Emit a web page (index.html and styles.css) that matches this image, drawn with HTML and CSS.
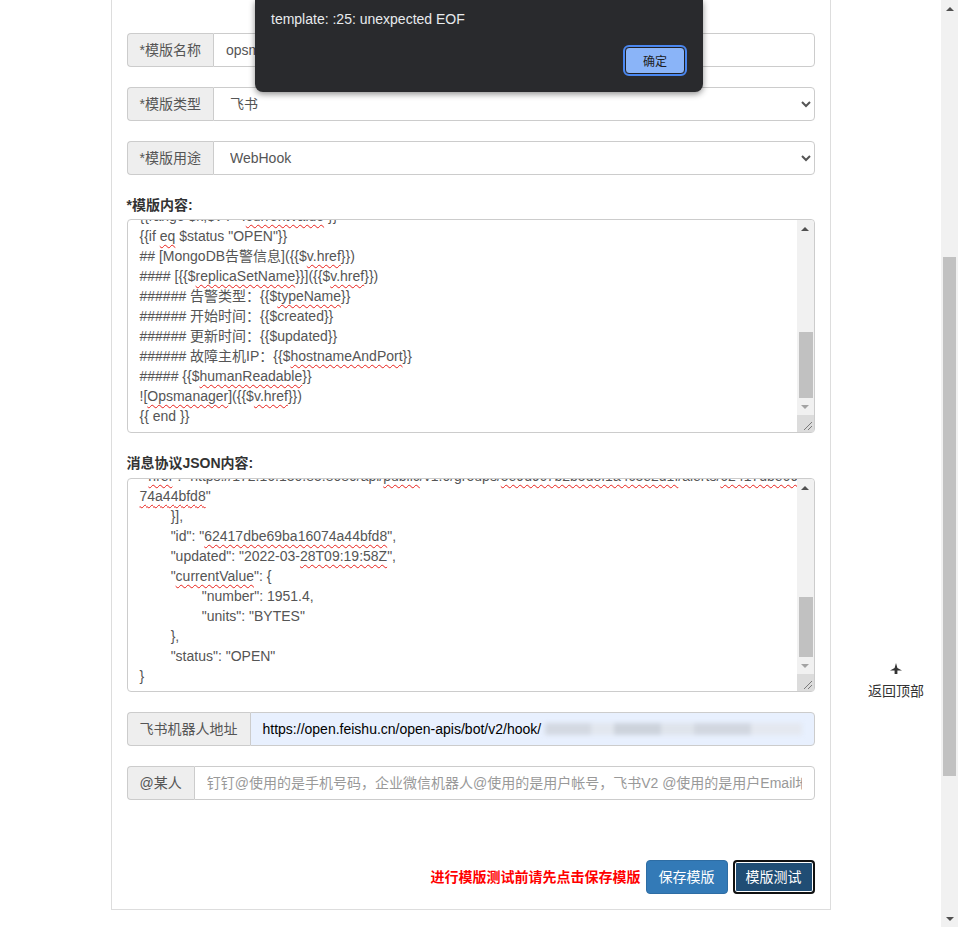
FILE: index.html
```html
<!doctype html>
<html>
	<head>
		<meta charset='utf-8'>
		<title>模版编辑</title>
		<link rel="stylesheet" href="styles.css">
	</head>
	<body>
		<div class='page'>
			<div class='panel'>
				<div class='input-group'>
					<span class='addon'>*模版名称</span>
					<input class='form-control' value='opsmanager-feishu'>
				</div>
				<div class='input-group'>
					<span class='addon'>*模版类型</span>
					<select class='form-control'>
						<option>飞书</option>
					</select>
				</div>
				<div class='input-group'>
					<span class='addon'>*模版用途</span>
					<select class='form-control'>
						<option>WebHook</option>
					</select>
				</div>

				<label class='field-label'>*模版内容:</label>
				<div class='ta'>
					<div class='ta-body'>
						<div class='ta-lines ta-lines-tpl'>
							<div>{{range $k,$v := .<span class='sp'>currentValue</span> }}</div>
							<div>{{if <span class='sp'>eq</span> $status "OPEN"}}</div>
							<div>## [MongoDB告警信息]({{$<span class='sp'>v.href</span>}})</div>
							<div>#### [{{$<span class='sp'>replicaSetName</span>}}]({{$<span class='sp'>v.href</span>}})</div>
							<div>###### 告警类型：{{$<span class='sp'>typeName</span>}}</div>
							<div>###### 开始时间：{{$created}}</div>
							<div>###### 更新时间：{{$updated}}</div>
							<div>###### 故障主机IP：{{$<span class='sp'>hostnameAndPort</span>}}</div>
							<div>##### {{$<span class='sp'>humanReadable</span>}}</div>
							<div>![<span class='sp'>Opsmanager</span>]({{$<span class='sp'>v.href</span>}})</div>
							<div>{{ end }}</div>
						</div>
					</div>
					<div class='sbar'>
						<div class='sbtn'><span class='arr-up'></span></div>
						<div class='strack'><div class='sthumb thumb-tpl'></div></div>
						<div class='sbtn'><span class='arr-down'></span></div>
						<div class='corner'>
							<svg width='17' height='17' viewBox='0 0 17 17'><path d='M15 7 L7 15 M15 11 L11 15' stroke='#7a7a7a' stroke-width='1'/></svg>
						</div>
					</div>
				</div>

				<label class='field-label'>消息协议JSON内容:</label>
				<div class='ta'>
					<div class='ta-body'>
						<div class='ta-lines ta-lines-json'>
							<div> "<span class='sp'>href</span>": "https://172.16.130.85:8080/api/<span class='sp'>public</span>/v1.0/groups/<span class='sp'>5e9d9c7b2b5d8f1a4c3e2d1f</span>/alerts/<span class='sp'>62417dbe69ba16074a44bfd8</span></div>
							<div><span class='sp'>74a44bfd8</span>"</div>
							<div>	}],</div>
							<div>	"id": "<span class='sp'>62417dbe69ba16074a44bfd8</span>",</div>
							<div>	"updated": "2022-03-<span class='sp'>28T09:19:58Z</span>",</div>
							<div>	"<span class='sp'>currentValue</span>": {</div>
							<div>		"number": 1951.4,</div>
							<div>		"units": "BYTES"</div>
							<div>	},</div>
							<div>	"status": "OPEN"</div>
							<div>}</div>
						</div>
					</div>
					<div class='sbar'>
						<div class='sbtn'><span class='arr-up'></span></div>
						<div class='strack'><div class='sthumb thumb-json'></div></div>
						<div class='sbtn'><span class='arr-down'></span></div>
						<div class='corner'>
							<svg width='17' height='17' viewBox='0 0 17 17'><path d='M15 7 L7 15 M15 11 L11 15' stroke='#7a7a7a' stroke-width='1'/></svg>
						</div>
					</div>
				</div>

				<div class='input-group'>
					<span class='addon'>飞书机器人地址</span>
					<div class='form-control autofill'>https://open.feishu.cn/open-apis/bot/v2/hook/<span class='blurred'></span></div>
				</div>
				<div class='input-group'>
					<span class='addon'>@某人</span>
					<input class='form-control' placeholder='钉钉@使用的是手机号码，企业微信机器人@使用的是用户帐号，飞书V2 @使用的是用户Email地址'>
				</div>

				<div class='actions'>
					<span class='warn'>进行模版测试前请先点击保存模版</span>
					<button class='btn btn-primary'>保存模版</button>
					<button class='btn btn-primary active'>模版测试</button>
				</div>
			</div>

			<div class='to-top'>
				<svg width='14' height='12' viewBox='0 0 14 12'><path d='M7 0 L8.4 5 L13 7.6 L8.4 7.6 L8.4 11 L5.6 11 L5.6 7.6 L1 7.6 L5.6 5 Z' fill='#333'/></svg>
				<div>返回顶部</div>
			</div>

			<!-- browser alert() box -->
			<div class='alert-box'>
				<div class='alert-msg'>template: :25: unexpected EOF</div>
				<div class='alert-foot'><button class='alert-ok'>确定</button></div>
			</div>
		</div>
		<div class='page-sbar'>
			<div class='psbtn'><span class='arr-up'></span></div>
			<div class='ptrack'><div class='pthumb'></div></div>
			<div class='psbtn'><span class='arr-down'></span></div>
		</div>
	</body>
</html>
```

FILE: styles.css
```css
html, body {
	height: 100%;
}

body {
	margin: 0;
	display: flex;
	overflow: hidden;
	font-family: "Liberation Sans", "Noto Sans CJK SC", sans-serif;
	font-size: 14px;
	line-height: 20px;
	color: #333;
	background: #fff;
}

.page {
	position: relative;
	flex: 1;
	height: 927px;
}

.panel {
	width: 688px;
	margin: 0 auto;
	padding: 33px 15px 15px 15px;
	border: 1px solid #ddd;
	border-top: none;
}

/* input groups */

.input-group {
	display: flex;
	height: 34px;
	margin-bottom: 20px;
}

.addon {
	display: flex;
	align-items: center;
	padding: 0 12px;
	background: #eee;
	color: #555;
	border: 1px solid #ccc;
	border-right: none;
	border-radius: 4px 0 0 4px;
	white-space: nowrap;
}

.form-control {
	flex: 1;
	min-width: 0;
	box-sizing: border-box;
	height: 34px;
	padding: 6px 12px;
	font-family: inherit;
	font-size: 14px;
	line-height: 20px;
	color: #555;
	background: #fff;
	border: 1px solid #ccc;
	border-radius: 0 4px 4px 0;
	outline: none;
}

.form-control::placeholder {
	color: #999;
}

.autofill {
	display: flex;
	align-items: center;
	overflow: hidden;
	white-space: nowrap;
	color: #000;
	background: #e8f0fe;
}

.blurred {
	display: inline-block;
	width: 268px;
	height: 12px;
	margin-left: 4px;
	background: linear-gradient(90deg, #d4d9e2 0 18%, #e2e7ef 18% 27%, #cdd3dc 27% 45%, #dfe4ec 45% 58%, #d2d7e0 58% 80%, #e4e8f0 80% 100%);
	filter: blur(2px);
}

/* textareas */

.field-label {
	display: block;
	font-weight: bold;
	margin-bottom: 4px;
}

.field-label + .ta + .field-label {
	margin-bottom: 5px;
}

.ta {
	display: flex;
	height: 212px;
	margin-bottom: 20px;
	border: 1px solid #ccc;
	border-radius: 4px;
	background: #fff;
}

.ta-body {
	flex: 1;
	overflow: hidden;
	padding: 6px 12px;
}

.ta-lines {
	color: #555;
	line-height: 20px;
}

.ta-lines > div {
	height: 20px;
	white-space: pre;
	tab-size: 8;
}

.ta-lines-tpl {
	margin-top: -20px;
}

.ta-lines-json {
	margin-top: -19px;
}

.sp {
	text-decoration: underline wavy #e8201a;
	text-decoration-skip-ink: none;
	text-decoration-thickness: 1px;
	text-underline-offset: 3px;
}

.sbar {
	display: flex;
	flex-direction: column;
	width: 17px;
	background: #f1f1f1;
	border-radius: 0 4px 4px 0;
}

.sbtn, .psbtn {
	height: 17px;
	display: flex;
	align-items: center;
	justify-content: center;
}

.strack, .ptrack {
	flex: 1;
	display: flex;
	flex-direction: column;
	justify-content: flex-end;
}

.sthumb {
	margin: 0 1px 0 2px;
	background: #c1c1c1;
}

.thumb-tpl {
	height: 66px;
}

.thumb-json {
	height: 60px;
}

.corner {
	height: 17px;
	background: #dcdcdc;
	line-height: 0;
}

.arr-up {
	width: 0;
	height: 0;
	border-left: 4px solid transparent;
	border-right: 4px solid transparent;
	border-bottom: 4px solid #505050;
}

.arr-down {
	width: 0;
	height: 0;
	border-left: 4px solid transparent;
	border-right: 4px solid transparent;
	border-top: 4px solid #a3a3a3;
}

/* page scrollbar */

.page-sbar {
	display: flex;
	flex-direction: column;
	width: 17px;
	height: 927px;
	background: #f1f1f1;
}

.page-sbar .ptrack {
	justify-content: flex-start;
	padding-top: 240px;
}

.pthumb {
	height: 519px;
	margin: 0 2px;
	background: #c1c1c1;
}

.page-sbar .arr-down {
	border-top-color: #505050;
}

/* bottom buttons */

.actions {
	display: flex;
	justify-content: flex-end;
	align-items: center;
	gap: 5px;
	margin-top: 60px;
}

.warn {
	color: #f00;
	font-weight: bold;
}

.btn {
	height: 34px;
	padding: 6px 12px;
	font-family: inherit;
	font-size: 14px;
	line-height: 20px;
	color: #fff;
	border: 1px solid #2e6da4;
	border-radius: 4px;
	background: #337ab7;
}

.btn.active {
	padding: 5px 11px;
	background: #204d74;
	border: 2px solid #111;
	box-shadow: inset 0 0 0 1px #fff;
}

/* back to top */

.to-top {
	position: absolute;
	top: 663px;
	right: 15px;
	width: 60px;
	text-align: center;
	font-size: 14px;
	line-height: 18px;
	color: #333;
}

.to-top svg {
	display: block;
	margin: 0 auto 7px auto;
}

/* alert box */

.alert-box {
	position: absolute;
	top: 0;
	left: 255px;
	width: 448px;
	box-sizing: border-box;
	padding: 11px 16px 16px 16px;
	background: #292a2d;
	border-radius: 0 0 8px 8px;
	box-shadow: 0 2px 6px rgba(0, 0, 0, 0.45);
}

.alert-msg {
	color: #e8eaed;
	font-size: 14px;
	line-height: 16px;
}

.alert-foot {
	display: flex;
	justify-content: flex-end;
	margin-top: 20px;
}

.alert-ok {
	width: 60px;
	height: 27px;
	margin: 0 2px 2px 0;
	font-family: inherit;
	font-size: 12px;
	color: #202124;
	background: #8ab4f8;
	border: 1px solid #202124;
	border-radius: 4px;
	outline: 2px solid #4a87f0;
	outline-offset: 0;
}
```
